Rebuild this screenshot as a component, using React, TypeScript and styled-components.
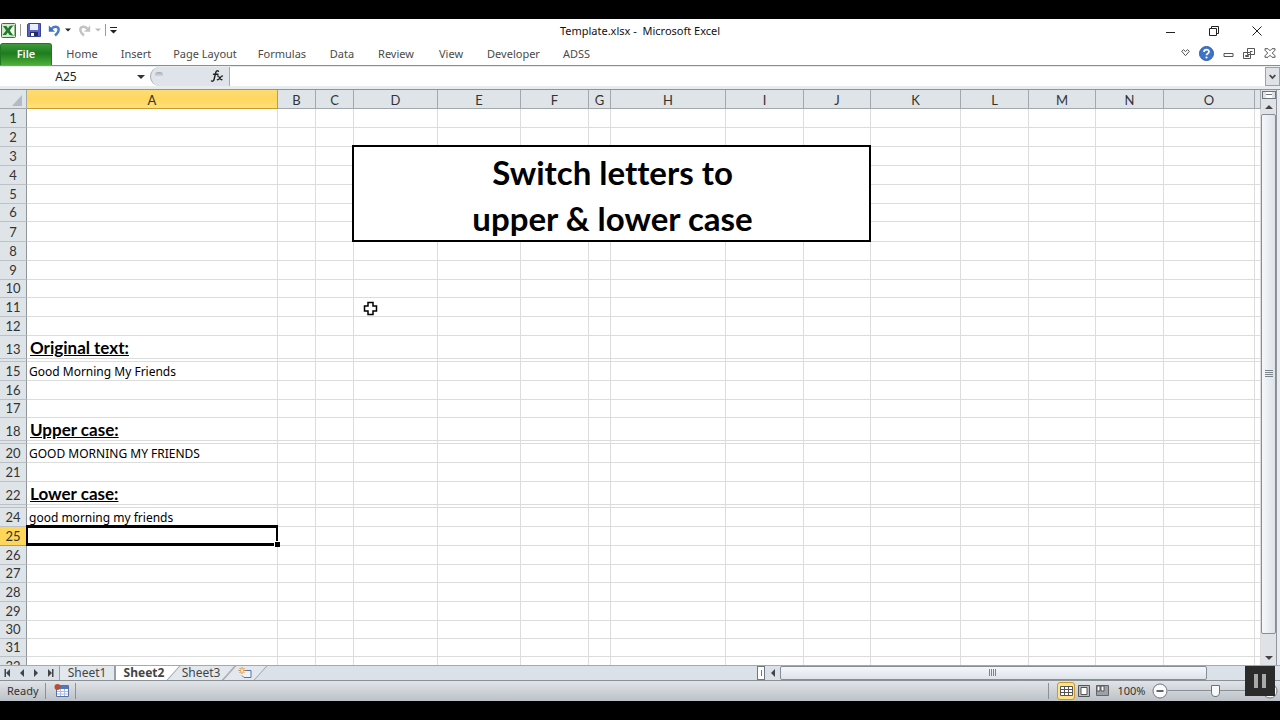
import React from "react";
import styled, { createGlobalStyle, css } from "styled-components";

const uiFont = '"Noto Sans", "Open Sans", sans-serif';
const cellFont = 'Lato, "Open Sans", sans-serif';

const Global = createGlobalStyle`
  *, *::before, *::after { box-sizing: border-box; }
  html, body, #root { height: 100%; }
  body { margin: 0; background: #000; font-family: ${uiFont}; font-size: 11px; color: #222; }
  button, input { font: inherit; color: inherit; }
  svg { display: block; flex: none; }
`;

const Screen = styled.div`
  height: 100%;
  padding: 19px 0;
  background: #000;
`;

const Window = styled.main`
  height: 100%;
  display: flex;
  flex-direction: column;
  background: #fff;
  overflow: hidden;
`;

const PlainButton = styled.button<{ $gap?: number }>`
  border: 0;
  padding: 0;
  margin-left: ${(p) => p.$gap ?? 0}px;
  background: none;
  display: flex;
  align-items: center;
  justify-content: center;
`;

/* Title bar */
const TitleBar = styled.header`
  flex: none;
  height: 24px;
  display: grid;
  grid-template-columns: 1fr auto 1fr;
  align-items: center;
`;

const QuickAccess = styled.div`
  display: flex;
  align-items: center;
  padding: 0 0 2px 1px;
`;

const Divider = styled.span`
  width: 1px;
  height: 12px;
  background: #9a9a9a;
  margin: 0 4px;
`;

const Title = styled.h1`
  margin: 0;
  font-size: 11px;
  font-weight: 400;
  line-height: 24px;
  color: #111;
`;

const WindowButtons = styled.div`
  display: flex;
  justify-content: flex-end;
  padding-right: 2px;
  & > button { width: 43px; height: 24px; }
`;

/* Ribbon tabs */
const Ribbon = styled.nav`
  flex: none;
  height: 23px;
  display: flex;
  align-items: stretch;
  border-bottom: 1px solid #8b8d90;
`;

const FileTab = styled.button`
  width: 52px;
  border: 1px solid #1f7a1f;
  border-bottom: 0;
  border-radius: 3px 3px 0 0;
  padding: 0 0 2px;
  background: linear-gradient(#3f9a3a, #1d7d1f 45%, #4fae35);
  color: #fff;
  font-size: 11px;
  font-weight: 600;
  line-height: 20px;
  margin-right: 1px;
`;

const RibbonTab = styled(PlainButton)<{ $w: number }>`
  width: ${(p) => p.$w}px;
  color: #4a4a4a;
  font-size: 11px;
  line-height: 20px;
  white-space: nowrap;
`;

const RibbonTools = styled.div`
  margin-left: auto;
  display: flex;
  align-items: center;
  padding: 0 4px 2px 0;
  gap: 9px;
`;

/* Formula bar */
const FormulaBar = styled.div`
  flex: none;
  height: 24px;
  display: flex;
  padding: 1px 0 3px;
  background: #e9ecef;
  border-bottom: 1px solid #8f9499;
`;

const NameBox = styled.div`
  width: 150px;
  display: flex;
  background: #fff;
`;

const NameInput = styled.input`
  width: 132px;
  border: 0;
  padding: 0 0 1px;
  background: none;
  text-align: center;
  font-size: 12px;
  outline: 0;
`;

const FunctionArea = styled.div`
  width: 80px;
  display: flex;
  align-items: center;
  justify-content: space-between;
  padding: 0 5px 1px 4px;
  background: #dfe4ea;
  border: 1px solid #a4a9b0;
  border-width: 0 1px;
  border-radius: 10px 0 0 10px;
`;

const FunctionWrap = styled.div`
  display: flex;
  background: #fff;
`;

const Knob = styled.span`
  width: 8px;
  height: 6px;
  border-radius: 3px;
  margin-bottom: 2px;
  background: linear-gradient(#a6abb2, #eef0f3);
`;

const FormulaInput = styled.input`
  flex: 1;
  min-width: 0;
  border: 0;
  padding: 0 4px;
  background: #fff;
  outline: 0;
`;

const ExpandButton = styled(PlainButton)`
  width: 15px;
  background: #dfe3e8;
  border: 1px solid #9da2a8;
`;

/* Worksheet */
const Workspace = styled.div`
  flex: 1;
  min-height: 0;
  display: flex;
`;

const Sheet = styled.div`
  flex: 1;
  min-width: 0;
  overflow: hidden;
`;

const Grid = styled.table`
  width: 100%;
  table-layout: fixed;
  border-collapse: separate;
  border-spacing: 0;
  font-family: ${cellFont};
`;

const headingCell = css`
  padding: 0;
  font-weight: 400;
  color: #333;
  overflow: hidden;
`;

const ColumnHead = styled.th<{ $active?: boolean }>`
  ${headingCell}
  height: 19px;
  font-size: 13px;
  line-height: 16px;
  padding-top: 2px;
  border-right: 1px solid ${(p) => (p.$active ? "#c99a2e" : "#a3a8ae")};
  border-bottom: 1px solid ${(p) => (p.$active ? "#c99a2e" : "#a3a8ae")};
  background: ${(p) => (p.$active ? "linear-gradient(#fbdc74, #ffd75e 50%, #ffe07a)" : "#dfe4e9")};
`;

const CornerHead = styled(ColumnHead)`
  padding: 0;
`;

const RowHead = styled.th<{ $active?: boolean; $thin?: boolean }>`
  ${headingCell}
  font-size: 13px;
  line-height: 16px;
  padding-bottom: ${(p) => (p.$thin ? 0 : 1)}px;
  vertical-align: bottom;
  border-right: 1px solid ${(p) => (p.$active ? "#c99a2e" : "#8f959b")};
  border-bottom: 1px solid ${(p) => (p.$active ? "#c99a2e" : "#bcc1c7")};
  background: ${(p) => (p.$active ? "#ffd758" : "#dfe4e9")};
`;

const Row = styled.tr<{ $h: number }>`
  height: ${(p) => p.$h}px;
`;

const Cell = styled.td<{ $heading?: boolean }>`
  position: relative;
  padding: 0 0 0 ${(p) => (p.$heading ? 3 : 2)}px;
  border-right: 1px solid #dcdcdc;
  border-bottom: 1px solid #dcdcdc;
  color: #000;
  white-space: nowrap;
  vertical-align: bottom;
  font-family: ${(p) => (p.$heading ? cellFont : uiFont)};
  font-size: ${(p) => (p.$heading ? 17 : 12)}px;
  font-weight: ${(p) => (p.$heading ? 700 : 400)};
  line-height: ${(p) => (p.$heading ? 21 : 16)}px;
  text-decoration: ${(p) => (p.$heading ? "underline" : "none")};
`;

const TitleCell = styled.td`
  position: relative;
  z-index: 1;
  padding: 0;
  background: #fff;
  color: #000;
  text-align: center;
  font-size: 33px;
  font-weight: 700;
  font-variant-ligatures: none;
  line-height: 46px;
  &::after {
    content: "";
    position: absolute;
    inset: -2px 0 0 -2px;
    border: 2px solid #000;
  }
`;

const Selection = styled.span`
  position: absolute;
  z-index: 1;
  inset: -2px -1px -1px -1px;
  border: 3px solid #000;
  border-width: 3px 2px 3px 2px;
  &::after {
    content: "";
    position: absolute;
    right: -4px;
    bottom: -4px;
    width: 6px;
    height: 6px;
    background: #000;
    border: 1px solid #fff;
    border-width: 1px 0 0 1px;
  }
`;

const SelectedCell = styled(Cell)`
  z-index: 1;
`;

const Pointer = styled.svg`
  position: absolute;
  left: 9px;
  top: 3px;
  z-index: 1;
`;

/* Scroll bars */
const VScroll = styled.div`
  width: 19px;
  display: flex;
  flex-direction: column;
  background: #dfe3e8;
  border-right: 3px solid #e8ecf0;
  box-shadow: inset -1px 0 0 #8f959b;
`;

const VSplit = styled.span`
  height: 8px;
  margin: 1px 1px 0 1px;
  border: 1px solid #70767d;
  background: linear-gradient(#fff 2px, #70767d 2px, #70767d 3px, #fff 3px);
  background-clip: content-box;
  padding: 0 3px;
  background-color: #fff;
`;

const VArrow = styled(PlainButton)`
  height: 15px;
  width: 15px;
`;

const Thumb = styled.span<{ $vertical?: boolean }>`
  display: flex;
  align-items: center;
  justify-content: center;
  border: 1px solid #868d95;
  border-radius: 2px;
  background: linear-gradient(${(p) => (p.$vertical ? "90deg" : "180deg")}, #f5f7fa, #dde3ea);
`;

const VTrack = styled.div`
  flex: 1;
  display: flex;
  flex-direction: column;
  & > span { height: 97%; width: 15px; }
`;

/* Sheet tabs */
const TabBar = styled.div`
  flex: none;
  height: 16px;
  display: grid;
  grid-template-columns: minmax(0, 757fr) minmax(0, 523fr);
  background: #dbe1e8;
  border-top: 1px solid #a4a9b0;
  border-bottom: 1px solid #8a9096;
`;

const Tabs = styled.div`
  display: flex;
  align-items: stretch;
  min-width: 0;
`;

const TabNav = styled.div`
  width: 59px;
  display: flex;
  align-items: center;
  justify-content: space-between;
  padding: 0 5px 0 4px;
`;

const SheetTab = styled.button<{ $w: number; $active?: boolean; $slant?: boolean }>`
  position: relative;
  z-index: 0;
  width: ${(p) => p.$w}px;
  border: 0;
  padding: 0;
  background: none;
  display: flex;
  justify-content: center;
  align-items: center;
  font-size: 12px;
  line-height: 14px;
  font-weight: ${(p) => (p.$active ? 700 : 400)};
  color: #444;
  &::before {
    content: "";
    position: absolute;
    z-index: -1;
    inset: 0 ${(p) => (p.$active ? -7 : 0)}px 0 0;
    border-left: 1px solid #989ea5;
    border-right: ${(p) => (p.$active ? 0 : 1)}px solid #989ea5;
    background: ${(p) => (p.$active ? "#fff" : "#e3e8ee")};
    transform: ${(p) => (p.$slant ? "skewX(-42deg)" : "none")};
  }
`;

const HScroll = styled.div`
  display: flex;
  align-items: stretch;
`;

const HSplit = styled.span`
  width: 8px;
  border: 1px solid #70767d;
  background: #fff;
  display: flex;
  justify-content: center;
  align-items: center;
  &::after { content: ""; width: 1px; height: 6px; background: #70767d; }
`;

const HArrow = styled(PlainButton)`
  width: 15px;
`;

const HTrack = styled.div`
  flex: 1;
  display: flex;
  & > span { width: 88%; }
`;

/* Status bar */
const StatusBar = styled.footer`
  flex: none;
  height: 20px;
  display: flex;
  align-items: center;
  padding: 0 2px 1px 7px;
  background: linear-gradient(#e0e4e8, #bcc1c7);
  color: #333;
  font-size: 11px;
`;

const StatusDivider = styled.span`
  width: 1px;
  height: 16px;
  margin: 0 8px 0 6px;
  background: #8b9198;
`;

const ViewControls = styled.div`
  margin-left: auto;
  display: flex;
  align-items: center;
`;

const ViewButton = styled(PlainButton)<{ $active?: boolean }>`
  width: 18px;
  height: 18px;
  border-radius: 3px;
  border: 1px solid ${(p) => (p.$active ? "#c9982f" : "transparent")};
  background: ${(p) => (p.$active ? "#ffe38a" : "none")};
`;

const ZoomLabel = styled.button`
  width: 41px;
  border: 0;
  padding: 0;
  background: none;
  font-size: 11px;
  line-height: 16px;
  text-align: center;
`;

const ZoomSlider = styled.input`
  appearance: none;
  width: 94px;
  height: 14px;
  margin: 0;
  background: linear-gradient(#8a9097, #8a9097) center / 100% 1px no-repeat;
  &::-webkit-slider-thumb {
    appearance: none;
    width: 9px;
    height: 12px;
    border: 1px solid #6d737a;
    border-radius: 1px 1px 5px 5px;
    background: #f7f8fa;
  }
`;

const PauseButton = styled(PlainButton)`
  position: fixed;
  right: 5px;
  bottom: 24px;
  width: 30px;
  height: 30px;
  background: #2b2b2b;
  gap: 4px;
  &::before, &::after { content: ""; width: 4px; height: 14px; background: #a9a9a9; }
`;

type Direction = "up" | "down" | "left" | "right";

const Triangle = ({ dir, size = 8, color = "#444", bar }: { dir: Direction; size?: number; color?: string; bar?: boolean }) => {
  const turn = { up: 180, down: 0, left: 90, right: 270 }[dir];
  return (
    <svg width={size} height={size} viewBox="0 0 8 8" aria-hidden="true">
      <g transform={`rotate(${turn} 4 4)`} fill={color}>
        <path d="M0 2h8L4 6z" />
        {bar && <path d="M0 6h8v1.500H0z" />}
      </g>
    </svg>
  );
};

const Grip = ({ vertical }: { vertical?: boolean }) => (
  <svg width="8" height="8" viewBox="0 0 8 8" aria-hidden="true">
    <path
      d={vertical ? "M0 .5h8M0 2.500h8M0 4.500h8M0 6.500h8" : "M.5 0v7M2.500 0v7M4.500 0v7M6.500 0v7"}
      stroke="#7d838a"
    />
  </svg>
);

const ExcelIcon = () => (
  <svg width="15" height="15" viewBox="0 0 15 15" aria-hidden="true">
    <rect x=".5" y=".5" width="14" height="14" rx="1" fill="#d3ebcc" stroke="#2b7d32" />
    <path d="M9.500 2.500h4v10h-4" fill="#fff" stroke="#8cc084" />
    <path d="M2 3h3.500L7 5.500 8.700 3H12L8.700 7.500 12 12H8.500L6.800 9.500 5 12H1.500l3.600-4.500z" fill="#217a2b" />
  </svg>
);

const SaveIcon = () => (
  <svg width="14" height="14" viewBox="0 0 14 14" aria-hidden="true">
    <path d="M.5 1.500l1-1h12v13H.5z" fill="#5a63c0" stroke="#3c439c" />
    <path d="M3 1h8v6H3z" fill="#e9effa" />
    <path d="M3 9h8v4H3z" fill="#262b62" />
    <path d="M4 10h3v3H4z" fill="#fff" />
  </svg>
);

const UndoIcon = ({ redo }: { redo?: boolean }) => (
  <svg width="13" height="13" viewBox="0 0 13 13" aria-hidden="true">
    <g transform={redo ? "matrix(-1 0 0 1 13 0)" : undefined}>
      <path
        d="M3.500 5C5.500 1.800 10.700 2 10.700 5.800c0 2.500-1.700 4-3.700 5.700"
        fill="none"
        stroke={redo ? "#c3c3c3" : "#4a7ac9"}
        strokeWidth="2.400"
      />
      <path d="M.8 1.500v6.300h6.200z" fill={redo ? "#c3c3c3" : "#3d6fc2"} />
    </g>
  </svg>
);

const columns: [string, number | undefined][] = [
  ["A", 251], ["B", 38], ["C", 38], ["D", 84], ["E", 83], ["F", 68], ["G", 22], ["H", 115],
  ["I", 78], ["J", 67], ["K", 90], ["L", 68], ["M", 67], ["N", 68], ["O", 91], ["", undefined],
];

const rowHeights: [number, number][] = [
  [1, 19], [2, 19], [3, 19], [4, 19], [5, 19], [6, 18], [7, 20], [8, 19], [9, 19], [10, 18],
  [11, 19], [12, 19], [13, 23], [14, 3], [15, 19], [16, 19], [17, 18], [18, 23], [19, 3],
  [20, 19], [21, 19], [22, 23], [23, 3], [24, 19], [25, 19], [26, 19], [27, 18], [28, 19],
  [29, 19], [30, 18], [31, 18], [32, 19],
];

const content: Record<number, string> = {
  13: "Original text:",
  15: "Good Morning My Friends",
  18: "Upper case:",
  20: "GOOD MORNING MY FRIENDS",
  22: "Lower case:",
  24: "good morning my friends",
};
const headings = [13, 18, 22];
const thin = [14, 19, 23];

const ribbonTabs: [string, number][] = [
  ["Home", 58], ["Insert", 50], ["Page Layout", 88], ["Formulas", 66], ["Data", 54],
  ["Review", 54], ["View", 56], ["Developer", 69], ["ADSS", 57],
];

const SheetCells = ({ row }: { row: number }) => (
  <>
    {columns.map(([name], i) => {
      const merged = row >= 3 && row <= 7 && i >= 3 && i <= 9;
      if (merged) {
        return row === 3 && i === 3 ? (
          <TitleCell key="title" colSpan={7} rowSpan={5}>
            Switch letters to
            <br />
            upper &amp; lower case
          </TitleCell>
        ) : null;
      }
      if (i === 0 && row === 25) {
        return <SelectedCell key={i}><Selection /></SelectedCell>;
      }
      return (
        <Cell key={i} $heading={i === 0 && headings.includes(row)}>
          {i === 0 ? content[row] : null}
          {name === "D" && row === 11 && (
            <Pointer width="15" height="15" viewBox="0 0 15 15" aria-hidden="true">
              <path d="M5 1.500h5V5h3.500v5H10v3.500H5V10H1.500V5H5z" fill="#fff" stroke="#000" strokeWidth="1.500" />
            </Pointer>
          )}
        </Cell>
      );
    })}
  </>
);

export default function App() {
  return (
    <>
      <Global />
      <Screen>
        <Window>
          <TitleBar>
            <QuickAccess>
              <ExcelIcon />
              <Divider />
              <PlainButton $gap={2} aria-label="Save"><SaveIcon /></PlainButton>
              <PlainButton $gap={7} aria-label="Undo"><UndoIcon /></PlainButton>
              <PlainButton $gap={4} aria-label="Undo history"><Triangle dir="down" size={6} color="#222" /></PlainButton>
              <PlainButton $gap={7} aria-label="Redo"><UndoIcon redo /></PlainButton>
              <PlainButton $gap={4} aria-label="Redo history"><Triangle dir="down" size={6} color="#bbb" /></PlainButton>
              <Divider />
              <PlainButton aria-label="Customize toolbar">
                <svg width="7" height="8" viewBox="0 0 7 8" aria-hidden="true">
                  <path d="M0 1h7v1H0zM0 4h7L3.500 7.500z" fill="#222" />
                </svg>
              </PlainButton>
            </QuickAccess>
            <Title>Template.xlsx&nbsp;-&nbsp; Microsoft Excel</Title>
            <WindowButtons>
              <PlainButton aria-label="Minimize">
                <svg width="10" height="10" viewBox="0 0 10 10"><path d="M0 6.500h9" stroke="#222" /></svg>
              </PlainButton>
              <PlainButton aria-label="Restore">
                <svg width="10" height="10" viewBox="0 0 10 10" fill="none" stroke="#222"><path d="M.5 2.500h7v7h-7zM2.500 2.500v-2h7v7h-2" /></svg>
              </PlainButton>
              <PlainButton aria-label="Close">
                <svg width="10" height="10" viewBox="0 0 10 10"><path d="M.5.5l9 9M9.500.5l-9 9" stroke="#222" /></svg>
              </PlainButton>
            </WindowButtons>
          </TitleBar>

          <Ribbon aria-label="Ribbon">
            <FileTab>File</FileTab>
            {ribbonTabs.map(([name, w]) => (
              <RibbonTab key={name} $w={w}>{name}</RibbonTab>
            ))}
            <RibbonTools>
              <PlainButton aria-label="Expand ribbon">
                <svg width="9" height="8" viewBox="0 0 9 8" fill="none" stroke="#555"><path d="M.7 2.300L2.500.7l2 1.800 2-1.800 1.800 1.600-3.800 4.400z" /></svg>
              </PlainButton>
              <PlainButton aria-label="Help">
                <svg width="15" height="15" viewBox="0 0 15 15">
                  <circle cx="7.500" cy="7.500" r="7" fill="#3f74c8" stroke="#2f5fae" />
                  <path d="M5 6c0-3.200 5-3.200 5-.3 0 1.800-2.500 1.700-2.500 3.600" fill="none" stroke="#fff" strokeWidth="1.700" />
                  <circle cx="7.500" cy="11.500" r="1.100" fill="#fff" />
                </svg>
              </PlainButton>
              <PlainButton aria-label="Minimize workbook">
                <svg width="11" height="11" viewBox="0 0 11 11"><path d="M1 5.500h9v3H1z" fill="#fff" stroke="#555" /></svg>
              </PlainButton>
              <PlainButton aria-label="Restore workbook">
                <svg width="12" height="11" viewBox="0 0 12 11" fill="#fff" stroke="#555"><path d="M4.500.5h7v6h-7zM.5 4.500h7v6h-7z" /><path d="M2.500 7.500h3v1h-3zM7 3.500h2.500" /></svg>
              </PlainButton>
              <PlainButton aria-label="Close workbook">
                <svg width="12" height="10" viewBox="0 0 12 10" fill="none" stroke="#555"><path d="M1 .7h3l2 2 2-2h3v1.500L8.300 5 11 7.800v1.500H8l-2-2-2 2H1V7.800L3.700 5 1 2.200z" /></svg>
              </PlainButton>
            </RibbonTools>
          </Ribbon>

          <FormulaBar>
            <NameBox>
              <NameInput aria-label="Name box" defaultValue="A25" />
              <PlainButton $gap={5} aria-label="Name list"><Triangle dir="down" color="#333" /></PlainButton>
            </NameBox>
            <FunctionWrap>
              <FunctionArea>
                <Knob />
                <PlainButton aria-label="Insert function">
                  <svg width="14" height="14" viewBox="0 0 14 14" fill="none" stroke="#222" strokeLinecap="round">
                    <path d="M8.500 2.300C7 .8 6 2.200 5.500 4.500L4.200 10c-.5 2-1.500 2.800-2.700 2M3.500 5.300H8" strokeWidth="1.400" />
                    <path d="M7.500 7c2-.8 2 4.500 4.500 3.700M12.500 7c-1.500-.5-3.500 4.500-5.200 3.700" strokeWidth="1.300" />
                  </svg>
                </PlainButton>
              </FunctionArea>
            </FunctionWrap>
            <FormulaInput aria-label="Formula" />
            <ExpandButton aria-label="Expand formula bar">
              <svg width="7" height="6" viewBox="0 0 7 6"><path d="M.7 1l2.800 3L6.300 1" fill="none" stroke="#444" strokeWidth="1.800" /></svg>
            </ExpandButton>
          </FormulaBar>

          <Workspace>
            <Sheet>
              <Grid>
                <colgroup>
                  <col width={27} />
                  {columns.map(([name, w]) => <col key={name} width={w} />)}
                </colgroup>
                <thead>
                  <tr>
                    <CornerHead aria-label="Select all">
                      <svg width="26" height="18" viewBox="0 0 26 18"><path d="M22 5v11H12z" fill="#b4bac1" /></svg>
                    </CornerHead>
                    {columns.map(([name]) => (
                      <ColumnHead key={name} scope="col" $active={name === "A"}>{name}</ColumnHead>
                    ))}
                  </tr>
                </thead>
                <tbody>
                  {rowHeights.map(([n, h]) => (
                    <Row key={n} $h={h}>
                      <RowHead scope="row" $active={n === 25} $thin={thin.includes(n)}>{thin.includes(n) ? null : n}</RowHead>
                      <SheetCells row={n} />
                    </Row>
                  ))}
                </tbody>
              </Grid>
            </Sheet>
            <VScroll>
              <VSplit />
              <VArrow aria-label="Scroll up"><Triangle dir="up" /></VArrow>
              <VTrack><Thumb $vertical><Grip vertical /></Thumb></VTrack>
              <VArrow aria-label="Scroll down"><Triangle dir="down" /></VArrow>
            </VScroll>
          </Workspace>

          <TabBar>
            <Tabs>
              <TabNav>
                <PlainButton aria-label="First sheet"><Triangle dir="left" bar /></PlainButton>
                <PlainButton aria-label="Previous sheet"><Triangle dir="left" /></PlainButton>
                <PlainButton aria-label="Next sheet"><Triangle dir="right" /></PlainButton>
                <PlainButton aria-label="Last sheet"><Triangle dir="right" bar /></PlainButton>
              </TabNav>
              <SheetTab $w={56}>Sheet1</SheetTab>
              <SheetTab $w={58} $active>Sheet2</SheetTab>
              <SheetTab $w={56} $slant>Sheet3</SheetTab>
              <SheetTab $w={32} $slant aria-label="Insert sheet">
                <svg width="14" height="12" viewBox="0 0 14 12">
                  <path d="M5 3.500h8v7H6l-2-2" fill="#eef3fb" stroke="#5570a8" />
                  <path d="M4 0v7M.5 3.500h7M1.500 1l5 5M6.500 1l-5 5" stroke="#e08a2c" />
                  <circle cx="4" cy="3.500" r="1.300" fill="#fff3c0" />
                </svg>
              </SheetTab>
            </Tabs>
            <HScroll>
              <HSplit />
              <HArrow aria-label="Scroll left"><Triangle dir="left" /></HArrow>
              <HTrack><Thumb><Grip /></Thumb></HTrack>
              <HArrow aria-label="Scroll right"><Triangle dir="right" /></HArrow>
            </HScroll>
          </TabBar>

          <StatusBar>
            <span>Ready</span>
            <StatusDivider />
            <PlainButton aria-label="Record macro">
              <svg width="15" height="13" viewBox="0 0 15 13">
                <path d="M2.500 1.500h12v11h-12z" fill="#fff" stroke="#5870a8" />
                <path d="M3 2h11v3H3z" fill="#4f77c4" />
                <path d="M3 7.500h11M3 10h11M6.500 5v7M10.500 5v7" stroke="#a9bbe0" />
                <circle cx="3.500" cy="3" r="3" fill="#bf4a2f" />
              </svg>
            </PlainButton>
            <StatusDivider />
            <ViewControls>
              <StatusDivider />
              <ViewButton $active aria-label="Normal view">
                <svg width="13" height="10" viewBox="0 0 13 10"><path d="M.5.5h12v9H.5zM.5 3.500h12M.5 6.500h12M4.500.5v9M8.500.5v9" fill="#fff" stroke="#555" /></svg>
              </ViewButton>
              <ViewButton aria-label="Page layout view">
                <svg width="12" height="12" viewBox="0 0 12 12"><path d="M.5.5h11v11H.5z" fill="#b9bec5" stroke="#555" /><path d="M3 2.500h6v7H3z" fill="#fff" stroke="#555" /></svg>
              </ViewButton>
              <ViewButton aria-label="Page break view">
                <svg width="13" height="11" viewBox="0 0 13 11"><path d="M.5.5h12v10H.5z" fill="#9ba1a9" stroke="#666" /><path d="M1 1h3v5H1zM5 1h3v5H5z" fill="#fff" stroke="#555" /></svg>
              </ViewButton>
              <ZoomLabel>100%</ZoomLabel>
              <PlainButton aria-label="Zoom out">
                <svg width="16" height="16" viewBox="0 0 16 16"><circle cx="8" cy="8" r="7" fill="#fafbfc" stroke="#70767d" /><path d="M4.500 8h7" stroke="#333" strokeWidth="1.500" /></svg>
              </PlainButton>
              <ZoomSlider type="range" aria-label="Zoom" min={0} max={200} defaultValue={100} />
              <PlainButton aria-label="Zoom in">
                <svg width="16" height="16" viewBox="0 0 16 16"><circle cx="8" cy="8" r="7" fill="#fafbfc" stroke="#70767d" /><path d="M4.500 8h7M8 4.500v7" stroke="#333" strokeWidth="1.500" /></svg>
              </PlainButton>
            </ViewControls>
          </StatusBar>
        </Window>
        <PauseButton aria-label="Pause" />
      </Screen>
    </>
  );
}
